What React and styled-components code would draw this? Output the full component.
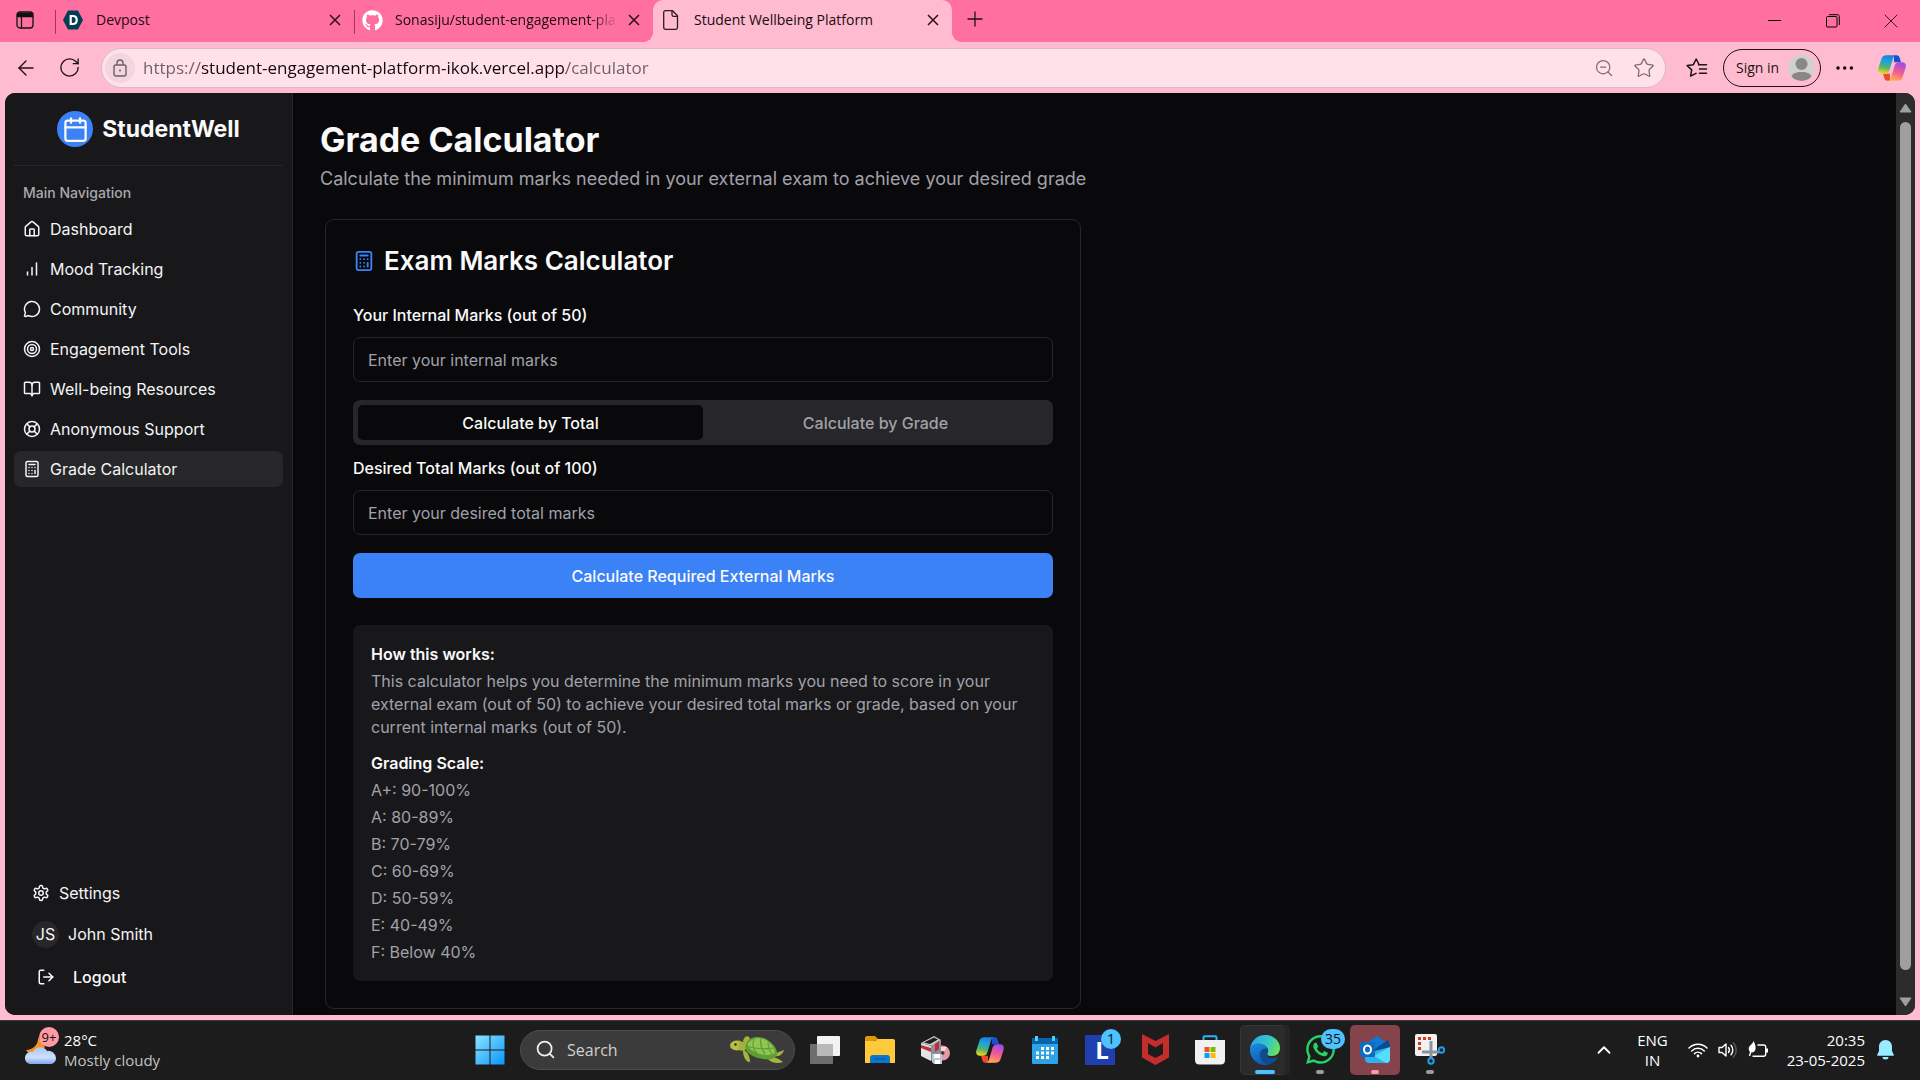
import React, { useState } from "react";
import styled, { createGlobalStyle, css } from "styled-components";
import {
  ArrowLeft,
  BookOpen,
  Calculator,
  Calendar,
  ChevronUp,
  LifeBuoy,
  LogOut,
  MessageCircle,
  Plus,
  RotateCw,
  Search,
  Star,
  Target,
  ZoomOut,
} from "lucide-react";
import { FaGithub, FaWhatsapp } from "react-icons/fa";

const Colors = {
  TAB_BAR: "#ff6fa0",
  TOOLBAR: "#ffbbd0",
  ADDRESS: "#ffe1ea",
  PAGE: "#09090b",
  PANEL: "#18181b",
  MUTED: "#27272a",
  TEXT: "#fafafa",
  DIM: "#a1a1aa",
  PRIMARY: "#3b82f6",
  TASKBAR: "#1c1c1c",
  ACCENT: "#4cc2ff",
};

const UI_FONT = `"Open Sans", "Noto Sans", sans-serif`;

const NAV = [
  { label: "Dashboard", icon: HomeIcon },
  { label: "Mood Tracking", icon: BarsIcon },
  { label: "Community", icon: MessageCircle },
  { label: "Engagement Tools", icon: Target },
  { label: "Well-being Resources", icon: BookOpen },
  { label: "Anonymous Support", icon: LifeBuoy },
  { label: "Grade Calculator", icon: Calculator, active: true },
];

const SCALE = [
  "A+: 90-100%",
  "A: 80-89%",
  "B: 70-79%",
  "C: 60-69%",
  "D: 50-59%",
  "E: 40-49%",
  "F: Below 40%",
];

const App = () => (
  <Shell>
    <GlobalStyle />
    <TabBar />
    <Toolbar />
    <Frame>
      <Viewport>
        <Sidebar />
        <CalculatorPage />
        <Scrollbar>
          <svg width="13" height="10" viewBox="0 0 13 10">
            <path d="M6.5 1 12 9H1z" fill="#9f9f9f" stroke="#9f9f9f" strokeLinejoin="round" />
          </svg>
          <Thumb />
          <svg width="13" height="10" viewBox="0 0 13 10">
            <path d="M6.5 9 12 1H1z" fill="#9f9f9f" stroke="#9f9f9f" strokeLinejoin="round" />
          </svg>
        </Scrollbar>
      </Viewport>
    </Frame>
    <Taskbar />
  </Shell>
);

export default App;

/* ---------- browser chrome ---------- */

const TabBar = () => (
  <TabStrip>
    <TabActions aria-label="Tab actions">
      <svg width="20" height="20" viewBox="0 0 20 20" fill="none" stroke="#111" strokeWidth="1.3">
        <rect x="2" y="2" width="16" height="16" rx="3" />
        <path d="M2.5 3.5h15v3h-15z" fill="#111" />
        <path d="M6.5 6v12" />
      </svg>
    </TabActions>
    <Tab $separator>
      <TabIcon>
        <svg width="20" height="20" viewBox="0 0 20 20">
          <path d="M5 .5h10l5 9.5-5 9.5H5L0 10z" fill="#003e54" />
          <path d="M7.7 6h2.1c2.6 0 3.9 1.5 3.9 4s-1.3 4-3.9 4H7.7z" fill="none" stroke="#fff" strokeWidth="2.2" />
        </svg>
      </TabIcon>
      <TabTitle>Devpost</TabTitle>
      <CloseTab />
    </Tab>
    <Tab $separator>
      <TabIcon>
        <FaGithub size={21} color="#fff" />
      </TabIcon>
      <TabTitle $fade>Sonasiju/student-engagement-pla</TabTitle>
      <CloseTab />
    </Tab>
    <Tab $active>
      <TabIcon>
        <svg width="18" height="20" viewBox="0 0 18 20" fill="none" stroke="#2b1d22" strokeWidth="1.3">
          <path d="M3.5.7h7l5 5v11.8c0 1-.7 1.8-1.7 1.8H3.5c-1 0-1.8-.8-1.8-1.8V2.5c0-1 .8-1.8 1.8-1.8z" />
          <path d="M10 .7v4c0 1 .6 1.6 1.6 1.6h3.9" />
        </svg>
      </TabIcon>
      <TabTitle>Student Wellbeing Platform</TabTitle>
      <CloseTab />
    </Tab>
    <NewTab aria-label="New tab">
      <Plus size={24} strokeWidth={1.3} />
    </NewTab>
    <WindowButtons>
      <ChromeButton aria-label="Minimize">
        <svg width="14" height="14" viewBox="0 0 14 14" stroke="#000">
          <path d="M0 6.5h13" />
        </svg>
      </ChromeButton>
      <ChromeButton aria-label="Restore">
        <svg width="14" height="14" viewBox="0 0 14 14" fill="none" stroke="#000">
          <rect x=".5" y="2.5" width="10.5" height="10.5" rx="1" />
          <path d="M3 .7h8.5c1 0 1.8.8 1.8 1.8V11" />
        </svg>
      </ChromeButton>
      <ChromeButton aria-label="Close">
        <svg width="14" height="14" viewBox="0 0 14 14" stroke="#3a1522">
          <path d="M.7.7l12.6 12.6M13.3.7.7 13.3" />
        </svg>
      </ChromeButton>
    </WindowButtons>
  </TabStrip>
);

const CloseTab = () => (
  <ChromeButton aria-label="Close tab">
    <svg width="12" height="12" viewBox="0 0 12 12" stroke="#2b1018" strokeWidth="1.5">
      <path d="m1 1 10 10m0-10L1 11" />
    </svg>
  </ChromeButton>
);

const Toolbar = () => (
  <ToolStrip>
    <ChromeButton aria-label="Back">
      <ArrowLeft size={24} strokeWidth={1.4} />
    </ChromeButton>
    <ChromeButton aria-label="Refresh">
      <RotateCw size={23} strokeWidth={1.4} />
    </ChromeButton>
    <AddressBar>
      <SiteInfo type="button" aria-label="View site information">
        <svg width="14" height="18" viewBox="0 0 14 18" fill="none" stroke="#6b6064" strokeWidth="1.4">
          <rect x="1" y="6" width="12" height="11" rx="2" />
          <path d="M4 6V4a3 3 0 0 1 6 0v2" />
          <circle cx="7" cy="11.5" r="1" fill="#6b6064" stroke="none" />
        </svg>
      </SiteInfo>
      <AddressInput
        type="text"
        aria-label="Address"
        defaultValue="https://student-engagement-platform-ikok.vercel.app/calculator"
      />
      <AddressButtons>
        <ChromeButton type="button" aria-label="Zoom out">
          <ZoomOut size={20} strokeWidth={1.5} color="#7b6e73" />
        </ChromeButton>
        <ChromeButton type="button" aria-label="Add to favorites">
          <Star size={22} strokeWidth={1.4} color="#7b6e73" />
        </ChromeButton>
      </AddressButtons>
    </AddressBar>
    <ToolButtons>
      <ChromeButton aria-label="Favorites">
        <svg width="22" height="20" viewBox="0 0 22 20" fill="none" stroke="#1d1216" strokeWidth="1.5" strokeLinejoin="round" strokeLinecap="round">
          <path d="M13 6.5 10.2 1 7.4 6.7 1.2 7.6l4.5 4.3-1.1 6.2L10 15.4" />
          <path d="M12.5 6.7h8M13.5 11h7M13.5 15.3h7" />
        </svg>
      </ChromeButton>
      <SignIn>
        Sign in
        <svg width="27" height="27" viewBox="0 0 27 27">
          <circle cx="13.5" cy="13.5" r="13.5" fill="#d2d0ce" />
          <circle cx="13.5" cy="10" r="6" fill="#8a8886" />
          <path d="M3.5 22.5c1-3 4-4.5 10-4.5s9 1.5 10 4.5a13.5 13.5 0 0 1-20 0z" fill="#8a8886" />
        </svg>
      </SignIn>
      <ChromeButton aria-label="Settings and more">
        <svg width="18" height="4" viewBox="0 0 18 4">
          <circle cx="2" cy="2" r="1.7" />
          <circle cx="8.7" cy="2" r="1.7" />
          <circle cx="15.4" cy="2" r="1.7" />
        </svg>
      </ChromeButton>
      <ChromeButton aria-label="Copilot">
        <CopilotIcon id="toolbar" />
      </ChromeButton>
    </ToolButtons>
  </ToolStrip>
);

/* ---------- web page ---------- */

const Sidebar = () => (
  <Side>
    <Brand>
      <BrandMark>
        <Calendar size={27} />
      </BrandMark>
      StudentWell
    </Brand>
    <NavTitle>Main Navigation</NavTitle>
    <NavList>
      {NAV.map(({ label, icon: Icon, active }) => (
        <NavLink key={label} href="#" $active={active}>
          <Icon size={18} />
          {label}
        </NavLink>
      ))}
    </NavList>
    <SideFooter>
      <NavLink href="#">
        <SettingsIcon />
        Settings
      </NavLink>
      <NavLink href="#">
        <Avatar>JS</Avatar>
        John Smith
      </NavLink>
      <LogoutButton>
        <LogOut size={18} />
        Logout
      </LogoutButton>
    </SideFooter>
  </Side>
);

const CalculatorPage = () => {
  const [mode, setMode] = useState("total");

  return (
    <Main>
      <Heading>Grade Calculator</Heading>
      <Subtitle>
        Calculate the minimum marks needed in your external exam to achieve your desired grade
      </Subtitle>
      <Card>
        <CardTitle>
          <Calculator size={22} color={Colors.PRIMARY} />
          Exam Marks Calculator
        </CardTitle>
        <Field>
          <Label htmlFor="internal">Your Internal Marks (out of 50)</Label>
          <Input id="internal" placeholder="Enter your internal marks" />
        </Field>
        <TabGroup>
          <Tabs role="tablist">
            <TabTrigger role="tab" aria-selected={mode === "total"} $active={mode === "total"} onClick={() => setMode("total")}>
              Calculate by Total
            </TabTrigger>
            <TabTrigger role="tab" aria-selected={mode === "grade"} $active={mode === "grade"} onClick={() => setMode("grade")}>
              Calculate by Grade
            </TabTrigger>
          </Tabs>
          <Field>
            <Label htmlFor="desired">Desired Total Marks (out of 100)</Label>
            <Input id="desired" placeholder="Enter your desired total marks" />
          </Field>
        </TabGroup>
        <Submit>Calculate Required External Marks</Submit>
        <Info>
          <InfoTitle>How this works:</InfoTitle>
          <InfoText>
            This calculator helps you determine the minimum marks you need to score in your
            external exam (out of 50) to achieve your desired total marks or grade, based on your
            current internal marks (out of 50).
          </InfoText>
          <InfoTitle>Grading Scale:</InfoTitle>
          <ScaleList>
            {SCALE.map((line) => (
              <li key={line}>{line}</li>
            ))}
          </ScaleList>
        </Info>
      </Card>
    </Main>
  );
};

/* ---------- taskbar ---------- */

const Taskbar = () => (
  <TaskStrip>
    <Weather>
      <WeatherIcon>
        <svg width="32" height="32" viewBox="0 0 32 32">
          <defs>
            <linearGradient id="cloud" x1="0" y1="0" x2="0" y2="1">
              <stop offset="0" stopColor="#a9c7f8" />
              <stop offset=".6" stopColor="#cfe0fb" />
              <stop offset="1" stopColor="#7fa5ee" />
            </linearGradient>
          </defs>
          <path d="M13 3c1 7-5 13-12 13 3 5 9 6 13 4l6-7z" fill="#f6931e" />
          <path d="M8 18a8 8 0 0 1 14-1 7.5 7.5 0 0 1 9 7c0 4-3 6-6 6H7c-4 0-7-2-7-6s4-7 8-6z" fill="url(#cloud)" />
        </svg>
        <Badge $pink>9+</Badge>
      </WeatherIcon>
      <TwoLines>
        <span>28°C</span>
        <Faded>Mostly cloudy</Faded>
      </TwoLines>
    </Weather>

    <TaskCenter>
      <TaskButton aria-label="Start">
        <svg width="30" height="30" viewBox="0 0 30 30">
          <defs>
            <linearGradient id="win" x1="0" y1="0" x2="1" y2="1">
              <stop offset="0" stopColor="#8ce4ff" />
              <stop offset="1" stopColor="#0a95fb" />
            </linearGradient>
          </defs>
          <path d="M.5.5h14v14H.5zM15.5.5h14v14h-14zM.5 15.5h14v14H.5zM15.5 15.5h14v14h-14z" fill="url(#win)" />
        </svg>
      </TaskButton>
      <SearchBox>
        <Search size={21} color="#f0f0f0" />
        <input type="text" placeholder="Search" aria-label="Search" />
        <TurtleIcon />
      </SearchBox>
      <TaskButton aria-label="Task view">
        <svg width="30" height="28" viewBox="0 0 30 28">
          <rect x="7" width="23" height="20" rx="1" fill="#f3f3f3" />
          <rect y="8" width="23" height="20" rx="1" fill="#6e6e6e" />
          <path d="M7 8h16v12H7z" fill="#b9b9b9" />
        </svg>
      </TaskButton>
      <TaskButton aria-label="File Explorer">
        <svg width="30" height="27" viewBox="0 0 30 27">
          <path d="M0 2c0-1 .7-2 2-2h8l4 4h-2L0 8z" fill="#d99a06" />
          <path d="M0 5h10l3-2h15c1.3 0 2 .7 2 2v22H0z" fill="#ffca3a" />
          <path d="M5 27v-5c0-1.7 1-3 3-3h14c2 0 3 1.3 3 3v5z" fill="#0b78cf" />
          <path d="M8.5 23h13" stroke="#06529a" strokeLinecap="round" />
        </svg>
      </TaskButton>
      <TaskButton aria-label="Installer">
        <svg width="30" height="30" viewBox="0 0 30 30">
          <circle cx="22.5" cy="18" r="7.5" fill="#e59aa6" />
          <path d="m18 12 5 6 4-6z" fill="#f6d9dd" />
          <circle cx="22.5" cy="18" r="2" fill="#4a3d40" />
          <path d="M1 8 14 1l7 4-9 6z" fill="#c9c9cd" />
          <path d="m4 7.500 10-5 4 2-8 4.500z" fill="#202022" />
          <path d="M1 8l10 3v15L1 21z" fill="#e2e3e8" />
          <path d="m1 10 10 3v4L1 13z" fill="#c13336" />
          <path d="m11 11 10-6v12l-10 9z" fill="#8d8f98" />
          <path d="m15 9 4-3v8l-4 3z" fill="#b92f35" />
          <path d="M12 19h10v10H14l-2-2z" fill="#b7c8d8" />
          <path d="M14 19h6v4h-6zM15 25h5v4h-5z" fill="#fff" />
        </svg>
      </TaskButton>
      <TaskButton aria-label="Copilot">
        <CopilotIcon id="taskbar" />
      </TaskButton>
      <TaskButton aria-label="Calendar">
        <svg width="26" height="28" viewBox="0 0 26 28">
          <rect y="2" width="26" height="26" rx="1" fill="#2ea4e8" />
          <path d="M0 2h26v6H0z" fill="#0a63ad" />
          <path d="M3 0h3v5H3zM20 0h3v5h-3z" fill="#4fd0f5" />
          <path d="M9 11h3v3H9zM14 11h3v3h-3zM19 11h3v3h-3zM4 15.5h3v3H4zM9 15.5h3v3H9zM14 15.5h3v3h-3zM19 15.5h3v3h-3zM4 20h3v3H4zM9 20h3v3H9zM14 20h3v3h-3z" fill="#fff" />
        </svg>
      </TaskButton>
      <TaskButton aria-label="L app">
        <Tile>L</Tile>
        <Badge>1</Badge>
      </TaskButton>
      <TaskButton aria-label="McAfee">
        <svg width="27" height="31" viewBox="0 0 27 31">
          <path d="m0 0 13.5 7L27 0v23.5L13.5 31 0 23.5zm6 9v11l7.5 4 7.5-4V9l-7.5 4.5z" fill="#c32d2b" />
        </svg>
      </TaskButton>
      <TaskButton aria-label="Microsoft Store">
        <svg width="30" height="30" viewBox="0 0 30 30">
          <path d="M8.5 7V2.5c0-.8.4-1.2 1.2-1.2h10.6c.8 0 1.2.4 1.2 1.2V7" fill="none" stroke="#29b6f2" strokeWidth="2" />
          <path d="M0 5h30v20c0 3-1.5 4.5-4.5 4.5h-21C1.5 29.5 0 28 0 25z" fill="#f1f1f1" />
          <path d="M9.5 12h5v5h-5z" fill="#f25022" />
          <path d="M15.5 12h5v5h-5z" fill="#7fba00" />
          <path d="M9.5 18h5v5h-5z" fill="#00a4ef" />
          <path d="M15.5 18h5v5h-5z" fill="#ffb900" />
        </svg>
      </TaskButton>
      <TaskButton aria-label="Microsoft Edge" $open>
        <EdgeIcon />
        <Indicator $wide />
      </TaskButton>
      <TaskButton aria-label="WhatsApp">
        <FaWhatsapp size={33} color="#25d366" />
        <Badge>35</Badge>
        <Indicator />
      </TaskButton>
      <TaskButton aria-label="Outlook" $alert>
        <svg width="30" height="27" viewBox="0 0 30 27">
          <path d="M5 8 17 0l13 9v5H5z" fill="#0f78d4" />
          <path d="m15 13 13-9 2 5v3L16 20z" fill="#0a4a94" />
          <path d="M5 15h10l15-4v12c0 2.5-1.500 4-4 4H9c-2.500 0-4-1.500-4-4z" fill="#2bb3f0" />
          <path d="m14 20 16-9v12c0 2.500-1.500 4-4 4z" fill="#58dcfb" />
          <rect y="6" width="15" height="15" rx="1" fill="#0f6cbd" />
          <ellipse cx="7.5" cy="13.5" rx="3.5" ry="4" fill="none" stroke="#fff" strokeWidth="2" />
        </svg>
        <Indicator $pink />
      </TaskButton>
      <TaskButton aria-label="Snipping Tool">
        <svg width="30" height="31" viewBox="0 0 30 31">
          <rect width="22" height="22" rx="2" fill="#f1f1f1" />
          <path d="M4.5 16V4.5H16" fill="none" stroke="#d2391b" strokeWidth="3" strokeDasharray="3 2" />
          <path d="M16 7v17M7 18h17" stroke="#8b949d" strokeWidth="3" />
          <circle cx="26.5" cy="16" r="2.7" fill="none" stroke="#1f9ee8" strokeWidth="2" />
          <circle cx="16" cy="27" r="2.7" fill="none" stroke="#1f9ee8" strokeWidth="2" />
        </svg>
        <Indicator />
      </TaskButton>
    </TaskCenter>

    <Tray>
      <TrayButton aria-label="Show hidden icons">
        <ChevronUp size={22} strokeWidth={2} />
      </TrayButton>
      <TwoLines $align="center">
        <span>ENG</span>
        <span>IN</span>
      </TwoLines>
      <TrayIcons>
        <svg width="20" height="16" viewBox="0 0 20 16" fill="none" stroke="#fff" strokeWidth="1.5" strokeLinecap="round">
          <path d="M1 6a12.5 12.5 0 0 1 18 0M3.7 8.9a8.7 8.7 0 0 1 12.6 0M6.5 11.6a5 5 0 0 1 7 0" />
          <circle cx="10" cy="14" r="1.4" fill="#fff" stroke="none" />
        </svg>
        <svg width="20" height="18" viewBox="0 0 20 18" fill="none" stroke="#fff" strokeWidth="1.4" strokeLinecap="round" strokeLinejoin="round">
          <path d="M1 6.5h3L8 3v12l-4-3.5H1z" />
          <path d="M10.5 6.5a4 4 0 0 1 0 5M13 4.3a7 7 0 0 1 0 9.4" />
          <path d="M15.5 2a10.5 10.5 0 0 1 0 14" stroke="#5a5a5a" />
        </svg>
        <svg width="21" height="18" viewBox="0 0 21 18" fill="none" stroke="#fff" strokeWidth="1.4">
          <path d="M9.5 4h6c1.3 0 2.2.8 2.2 2v7c0 1.3-.9 2.200-2.200 2.200H4.500" />
          <path d="M19 7.500v4" strokeWidth="2" />
          <path d="M5.500 0c2 3 3.500 8.500.3 11C2 12.500.3 9.500.8 7 1.200 4.500 4.500 3.500 5.500 0z" fill="#fff" stroke="none" />
          <path d="M3 10 1.500 15" />
        </svg>
      </TrayIcons>
      <TwoLines $align="right">
        <span>20:35</span>
        <span>23-05-2025</span>
      </TwoLines>
      <TrayButton aria-label="Notifications">
        <svg width="17" height="20" viewBox="0 0 17 20" fill="#99ebff">
          <path d="M8.5 0C4.5 0 2 3 2 6.5V11L.3 14.5c-.3.7 0 1.3.7 1.3h15c.7 0 1-.6.7-1.3L15 11V6.5C15 3 12.5 0 8.5 0z" />
          <path d="M5.5 17h6a3 2.5 0 0 1-6 0z" />
        </svg>
      </TrayButton>
    </Tray>
  </TaskStrip>
);

/* ---------- drawings ---------- */

function HomeIcon({ size }) {
  return (
    <StrokeIcon width={size} height={size} viewBox="0 0 24 24">
      <path d="M15 21v-8a1 1 0 0 0-1-1h-4a1 1 0 0 0-1 1v8" />
      <path d="M3 10a2 2 0 0 1 .709-1.528l7-5.999a2 2 0 0 1 2.582 0l7 5.999A2 2 0 0 1 21 10v9a2 2 0 0 1-2 2H5a2 2 0 0 1-2-2z" />
    </StrokeIcon>
  );
}

function BarsIcon({ size }) {
  return (
    <StrokeIcon width={size} height={size} viewBox="0 0 24 24">
      <path d="M12 20V10M18 20V4M6 20v-4" />
    </StrokeIcon>
  );
}

const SettingsIcon = () => (
  <StrokeIcon width="18" height="18" viewBox="0 0 24 24">
    <path d="M12.22 2h-.44a2 2 0 0 0-2 2v.18a2 2 0 0 1-1 1.73l-.43.25a2 2 0 0 1-2 0l-.15-.08a2 2 0 0 0-2.73.73l-.22.38a2 2 0 0 0 .73 2.73l.15.1a2 2 0 0 1 1 1.72v.51a2 2 0 0 1-1 1.74l-.15.09a2 2 0 0 0-.73 2.73l.22.38a2 2 0 0 0 2.73.73l.15-.08a2 2 0 0 1 2 0l.43.25a2 2 0 0 1 1 1.73V20a2 2 0 0 0 2 2h.44a2 2 0 0 0 2-2v-.18a2 2 0 0 1 1-1.73l.43-.25a2 2 0 0 1 2 0l.15.08a2 2 0 0 0 2.73-.73l.22-.39a2 2 0 0 0-.73-2.73l-.15-.08a2 2 0 0 1-1-1.74v-.5a2 2 0 0 1 1-1.74l.15-.09a2 2 0 0 0 .73-2.73l-.22-.38a2 2 0 0 0-2.73-.73l-.15.08a2 2 0 0 1-2 0l-.43-.25a2 2 0 0 1-1-1.73V4a2 2 0 0 0-2-2z" />
    <circle cx="12" cy="12" r="3" />
  </StrokeIcon>
);

const CopilotIcon = ({ id }) => (
  <svg width="28" height="26" viewBox="0 0 28 26">
    <defs>
      <linearGradient id={`${id}-cool`} x1=".5" y1="0" x2=".3" y2="1">
        <stop offset="0" stopColor="#1b7fe8" />
        <stop offset=".35" stopColor="#1fa5d8" />
        <stop offset=".65" stopColor="#52b36b" />
        <stop offset="1" stopColor="#f4d81c" />
      </linearGradient>
      <linearGradient id={`${id}-warm`} x1=".3" y1="1" x2=".6" y2="0">
        <stop offset="0" stopColor="#ffb04f" />
        <stop offset=".45" stopColor="#f4618c" />
        <stop offset="1" stopColor="#a348e8" />
      </linearGradient>
    </defs>
    <path d="M16 .3h2.500c2 0 2.800 1.200 3.300 3l1.200 4h-7z" fill="#1a4fd0" />
    <path d="M12 25.700H9.500c-2 0-2.800-1.200-3.300-3l-1.200-4h7z" fill="#ee4b2b" />
    <path d="M8.500.3H18c-2 .4-2.700 2-3.400 4.500L11.500 15c-.8 2.600-2 3.700-4.500 3.700H4C.8 18.700-.6 16.500.5 13L3.200 4.500C4.100 1.600 5.600.3 8.500.3z" fill={`url(#${id}-cool)`} />
    <path d="M19.500 25.700H10c2-.4 2.700-2 3.400-4.500L16.500 11c.8-2.600 2-3.700 4.500-3.700h3c3.200 0 4.600 2.200 3.500 5.700l-2.700 8.500c-.9 2.900-2.400 4.200-5.300 4.200z" fill={`url(#${id}-warm)`} />
  </svg>
);

const EdgeIcon = () => (
  <svg width="30" height="30" viewBox="0 0 30 30">
    <defs>
      <linearGradient id="edge-top" x1="0" y1=".3" x2="1" y2=".6">
        <stop offset="0" stopColor="#2aa7e8" />
        <stop offset=".55" stopColor="#33c6c8" />
        <stop offset="1" stopColor="#6ae35a" />
      </linearGradient>
      <linearGradient id="edge-body" x1="0" y1="0" x2=".4" y2="1">
        <stop offset="0" stopColor="#1c8fe0" />
        <stop offset="1" stopColor="#0d5cb5" />
      </linearGradient>
    </defs>
    <path d="M0 14C1 6 7 0 15 0c9 0 15 6 15 13 0 5-3.5 8-8 8-4 0-5.5-1.5-4.5-3 1.5-2 .5-7-5-8.5C7 8 2 10 0 14z" fill="url(#edge-top)" />
    <path d="M0 14c2-5 7-7 12-5 3 1 5 3 5.5 5-4-1-7 1.5-7 6 0 5 4 9 9 9.3A15 15 0 0 1 0 14z" fill="url(#edge-body)" />
    <path d="M17 14c-4-1-7.5 1.5-7 6.5C10.5 25.5 15 30 20 29c3-1 6-3 7.5-6 .3-.7-.3-1-1-.7-4.5 2-8.500 1-9.500-2-.5-2 1-3 1-4.500z" fill="#124a8f" />
  </svg>
);

const TurtleIcon = () => (
  <svg width="54" height="29" viewBox="0 0 54 29">
    <path d="M13 6c1-4 4-6 6-4s0 6-3 8zM14 15c3 2 6 5 6 12-4 1-7-6-7-11zM39 21c5 1 11 3 14 6-5 2-12 1-15-3zM46 18c4-1 7-3 8-3-1 4-5 7-9 6z" fill="#a5b43d" />
    <ellipse cx="7" cy="10.5" rx="7" ry="5" fill="#b8bf46" />
    <path d="M9 7c4-1 8 0 9 5l-4 4-6-1z" fill="#a2b23c" />
    <circle cx="5.5" cy="9.5" r="1.2" fill="#27300f" />
    <path d="M16 9C18 2 28 0 36 4c7 4 12 10 11 16-3 6-14 5-22 2-7-3-11-7-9-13z" fill="#5f9e35" />
    <path d="M18 8c4-5 12-6 18-3 6 4 9 9 9 13-5 3-13 2-18 0-7-3-10-6-9-10z" fill="#8fc653" />
    <path d="M24 4c-2 5-1 11 3 14M31 3c-1 5 0 11 4 16M38 7c0 4 1 8 4 12M17 11c8 3 19 3 27 2" fill="none" stroke="#5f9e35" strokeWidth="1.2" />
  </svg>
);

/* ---------- styles ---------- */

const GlobalStyle = createGlobalStyle`
  * { box-sizing: border-box; }
  body {
    margin: 0;
    background: ${Colors.TOOLBAR};
    font-family: ${UI_FONT};
  }
  button, input { font: inherit; }
  svg { display: block; flex-shrink: 0; }
`;

const StrokeIcon = styled.svg`
  fill: none;
  stroke: currentColor;
  stroke-width: 2;
  stroke-linecap: round;
  stroke-linejoin: round;
`;

const Shell = styled.div`
  display: flex;
  flex-direction: column;
  height: 100vh;
  overflow: hidden;
`;

const TabStrip = styled.header`
  display: flex;
  height: 42px;
  background: ${Colors.TAB_BAR};
  font-size: 14px;
`;

const ChromeButton = styled.button`
  display: flex;
  align-items: center;
  justify-content: center;
  padding: 0;
  border: 0;
  background: none;
  color: #1d1216;
`;

const TabActions = styled(ChromeButton)`
  width: 55px;
  padding: 0 6px 2px 0;
`;

const Tab = styled.div`
  position: relative;
  display: flex;
  align-items: center;
  flex: 0 1 299px;
  min-width: 0;
  padding: 0 13px 2px 8px;

  ${({ $separator }) =>
    $separator &&
    css`
      &::before {
        content: "";
        position: absolute;
        left: 0;
        top: 10px;
        width: 1px;
        height: 24px;
        background: #a3345c;
      }
    `}

  ${({ $active }) =>
    $active &&
    css`
      background: ${Colors.TOOLBAR};
      border-radius: 10px 10px 0 0;

      &::before,
      &::after {
        content: "";
        position: absolute;
        bottom: 0;
        width: 10px;
        height: 10px;
      }
      &::before {
        right: 100%;
        background: radial-gradient(circle at 0 0, transparent 10px, ${Colors.TOOLBAR} 10px);
      }
      &::after {
        left: 100%;
        background: radial-gradient(circle at 100% 0, transparent 10px, ${Colors.TOOLBAR} 10px);
      }
    `}
`;

const TabIcon = styled.span`
  display: flex;
  justify-content: center;
  width: 20px;
  margin-right: 13px;
`;

const TabTitle = styled.span`
  flex: 1;
  min-width: 0;
  margin-right: 5px;
  overflow: hidden;
  white-space: nowrap;
  line-height: 20px;
  color: #1a0a10;
  ${({ $fade }) => $fade && "mask-image: linear-gradient(90deg, #000 86%, transparent 98%);"}
`;

const NewTab = styled(ChromeButton)`
  width: 45px;
  padding-bottom: 4px;
`;

const WindowButtons = styled.div`
  display: flex;
  gap: 44px;
  margin-left: auto;
  padding-right: 22px;
`;

const ToolStrip = styled.div`
  display: flex;
  align-items: center;
  gap: 20px;
  height: 51px;
  padding: 0 14px;
  background: ${Colors.TOOLBAR};
  color: #1d1216;
`;

const AddressBar = styled.form`
  display: flex;
  align-items: center;
  flex: 1;
  height: 40px;
  padding: 0 10px 0 3px;
  background: ${Colors.ADDRESS};
  border: 1px solid #d5bcc5;
  border-radius: 20px;
`;

const SiteInfo = styled(ChromeButton)`
  width: 30px;
  height: 30px;
  border-radius: 15px;
  background: #f3d5df;
`;

const AddressInput = styled.input`
  flex: 1;
  margin-left: 8px;
  padding: 0;
  border: 0;
  outline: 0;
  font-size: 17px;
  line-height: 24px;
  color: transparent;
  background: linear-gradient(90deg, #6d5f64 58px, #16090e 58px, #16090e 423px, #6d5f64 423px);
  background-clip: text;
`;

const AddressButtons = styled.div`
  display: flex;
  gap: 19px;
`;

const ToolButtons = styled.div`
  display: flex;
  align-items: center;
  gap: 15px;

  > :last-child {
    margin-left: 9px;
  }
`;

const SignIn = styled(ChromeButton)`
  justify-content: space-between;
  width: 98px;
  height: 38px;
  padding: 0 5px 0 12px;
  border: 1px solid #1d1216;
  border-radius: 19px;
  font-size: 14px;
`;

const Frame = styled.div`
  display: flex;
  flex: 1;
  min-height: 0;
  padding: 0 5px 5px;
  background: ${Colors.TOOLBAR};
`;

const Viewport = styled.div`
  display: flex;
  flex: 1;
  overflow: hidden;
  border-radius: 10px;
  background: ${Colors.PAGE};
  color: ${Colors.TEXT};
  font-family: Inter, sans-serif;
  font-size: 16px;
`;

const Scrollbar = styled.div`
  display: flex;
  flex-direction: column;
  align-items: center;
  gap: 9px;
  width: 19px;
  padding: 10px 0 8px;
  background: #2c2c2c;
`;

const Thumb = styled.div`
  flex: 1;
  width: 11px;
  margin-bottom: 18px;
  border-radius: 6px;
  background: #9f9f9f;
`;

const Side = styled.aside`
  display: flex;
  flex-direction: column;
  width: 288px;
  padding: 0 9px;
  background: ${Colors.PANEL};
  border-right: 1px solid ${Colors.MUTED};
`;

const Brand = styled.div`
  display: flex;
  align-items: center;
  justify-content: center;
  gap: 9px;
  height: 73px;
  border-bottom: 1px solid ${Colors.MUTED};
  font-size: 23px;
  font-weight: 700;
`;

const BrandMark = styled.span`
  display: grid;
  place-items: center;
  width: 36px;
  height: 36px;
  border-radius: 50%;
  background: ${Colors.PRIMARY};
`;

const NavTitle = styled.h2`
  margin: 0;
  padding: 17px 9px 8px;
  font-size: 14px;
  font-weight: 500;
  line-height: 20px;
  color: #a9a9ac;
`;

const NavList = styled.nav`
  display: flex;
  flex-direction: column;
  gap: 4px;
`;

const NavLink = styled.a`
  display: flex;
  align-items: center;
  gap: 9px;
  height: 36px;
  padding: 0 9px;
  border-radius: 7px;
  color: #f4f4f5;
  line-height: 22px;
  text-decoration: none;
  background: ${({ $active }) => ($active ? Colors.MUTED : "transparent")};
`;

const SideFooter = styled.div`
  display: flex;
  flex-direction: column;
  gap: 5px;
  margin-top: auto;
  padding: 0 9px 18px;
`;

const Avatar = styled.span`
  display: grid;
  place-items: center;
  width: 27px;
  height: 27px;
  border-radius: 50%;
  background: ${Colors.MUTED};
`;

const LogoutButton = styled.button`
  display: flex;
  align-items: center;
  gap: 18px;
  height: 40px;
  padding: 0 14px;
  border: 0;
  background: none;
  color: ${Colors.TEXT};
  font-weight: 500;
`;

const Main = styled.main`
  flex: 1;
  min-width: 0;
  padding: 27px;
`;

const Heading = styled.h1`
  margin: 0;
  font-size: 34px;
  font-weight: 700;
  line-height: 40px;
`;

const Subtitle = styled.p`
  margin: 5px 0 27px;
  font-size: 18px;
  line-height: 27px;
  color: ${Colors.DIM};
`;

const Card = styled.section`
  display: flex;
  flex-direction: column;
  gap: 18px;
  max-width: 756px;
  margin-left: 5px;
  padding: 27px;
  border: 1px solid ${Colors.MUTED};
  border-radius: 9px;
`;

const CardTitle = styled.h2`
  display: flex;
  align-items: center;
  gap: 9px;
  margin: 0 0 14px;
  font-size: 26px;
  font-weight: 600;
  line-height: 27px;
`;

const Field = styled.div`
  display: flex;
  flex-direction: column;
  gap: 13px;
`;

const Label = styled.label`
  font-weight: 500;
  line-height: 18px;
`;

const Input = styled.input`
  width: 100%;
  height: 45px;
  padding: 0 14px;
  border: 1px solid ${Colors.MUTED};
  border-radius: 7px;
  background: ${Colors.PAGE};
  color: ${Colors.TEXT};

  &::placeholder {
    color: ${Colors.DIM};
  }
`;

const TabGroup = styled.div`
  display: flex;
  flex-direction: column;
  gap: 14px;
`;

const Tabs = styled.div`
  display: grid;
  grid-template-columns: 1fr 1fr;
  height: 45px;
  padding: 5px;
  border-radius: 7px;
  background: ${Colors.MUTED};
`;

const TabTrigger = styled.button`
  border: 0;
  border-radius: 5px;
  background: ${({ $active }) => ($active ? Colors.PAGE : "transparent")};
  color: ${({ $active }) => ($active ? Colors.TEXT : Colors.DIM)};
  font-weight: 500;
`;

const Submit = styled.button`
  height: 45px;
  border: 0;
  border-radius: 7px;
  background: ${Colors.PRIMARY};
  color: ${Colors.TEXT};
  font-weight: 500;
`;

const Info = styled.div`
  margin-top: 9px;
  padding: 18px;
  border-radius: 7px;
  background: ${Colors.PANEL};
  line-height: 22px;
  color: ${Colors.DIM};
`;

const InfoTitle = styled.h3`
  margin: 0 0 5px;
  font-size: 16px;
  font-weight: 600;
  color: ${Colors.TEXT};
`;

const InfoText = styled.p`
  margin: 0 0 13px;
  line-height: 23px;
`;

const ScaleList = styled.ul`
  display: flex;
  flex-direction: column;
  gap: 5px;
  margin: 0;
  padding: 0;
  list-style: none;
`;

const TaskStrip = styled.footer`
  display: grid;
  grid-template-columns: 1fr auto 1fr;
  align-items: center;
  height: 60px;
  padding-bottom: 2px;
  border-top: 1px solid #3b3b3b;
  background: ${Colors.TASKBAR};
  color: #fff;
  font-size: 15px;
`;

const Weather = styled.div`
  display: flex;
  align-items: center;
  gap: 7px;
  padding-left: 25px;
`;

const WeatherIcon = styled.span`
  position: relative;
`;

const TwoLines = styled.div`
  display: flex;
  flex-direction: column;
  line-height: 20px;
  text-align: ${({ $align }) => $align || "left"};
`;

const Faded = styled.span`
  color: #c2c2c2;
`;

const Badge = styled.span`
  position: absolute;
  top: 4px;
  left: 26px;
  min-width: 20px;
  height: 20px;
  padding: 0 4px;
  border-radius: 10px;
  background: ${Colors.ACCENT};
  color: #111;
  font-size: 14px;
  line-height: 20px;
  text-align: center;

  ${({ $pink }) =>
    $pink &&
    css`
      top: -7px;
      left: 14px;
      padding: 0 2px;
      background: #ff99a4;
      font-size: 13px;
    `}
`;

const TaskCenter = styled.div`
  display: flex;
  align-items: center;
  gap: 5px;
`;

const TaskButton = styled.button`
  position: relative;
  display: grid;
  place-items: center;
  width: 50px;
  height: 50px;
  padding: 0;
  border: 0;
  border-radius: 5px;
  background: ${({ $open, $alert }) => ($open ? "#2b2b2b" : $alert ? "#85444b" : "transparent")};
  ${({ $open }) => $open && "box-shadow: inset -6px 0 0 -1px #242424, inset 0 0 0 1px #353535;"}
`;

const Indicator = styled.span`
  position: absolute;
  bottom: 1px;
  left: 50%;
  width: ${({ $wide }) => ($wide ? "20px" : "8px")};
  height: 4px;
  border-radius: 2px;
  transform: translateX(-50%);
  background: ${({ $wide, $pink }) => ($wide ? Colors.ACCENT : $pink ? "#ff99a4" : "#9a9a9a")};
`;

const Tile = styled.span`
  width: 30px;
  height: 30px;
  padding-left: 4px;
  background: #1f3fb0;
  color: #fff;
  font-size: 24px;
  font-weight: 700;
  line-height: 30px;
`;

const SearchBox = styled.label`
  display: flex;
  align-items: center;
  width: 275px;
  height: 40px;
  padding: 0 10px 0 14px;
  border: 1px solid #4d4d4d;
  border-radius: 20px;
  background: #3b3b3b;

  input {
    flex: 1;
    min-width: 0;
    padding: 0 0 0 11px;
    border: 0;
    outline: 0;
    background: none;
    color: #fff;
    font-size: 16px;
  }
  input::placeholder {
    color: #d0d0d0;
  }
`;

const Tray = styled.div`
  display: flex;
  align-items: center;
  justify-content: flex-end;
  gap: 12px;
  padding-right: 26px;
`;

const TrayIcons = styled.div`
  display: flex;
  align-items: center;
  gap: 10px;
  margin: 0 6px 0 8px;
`;

const TrayButton = styled.button`
  display: flex;
  padding: 0;
  border: 0;
  background: none;
  color: #fff;

  &:first-child {
    margin-right: 10px;
  }
`;
